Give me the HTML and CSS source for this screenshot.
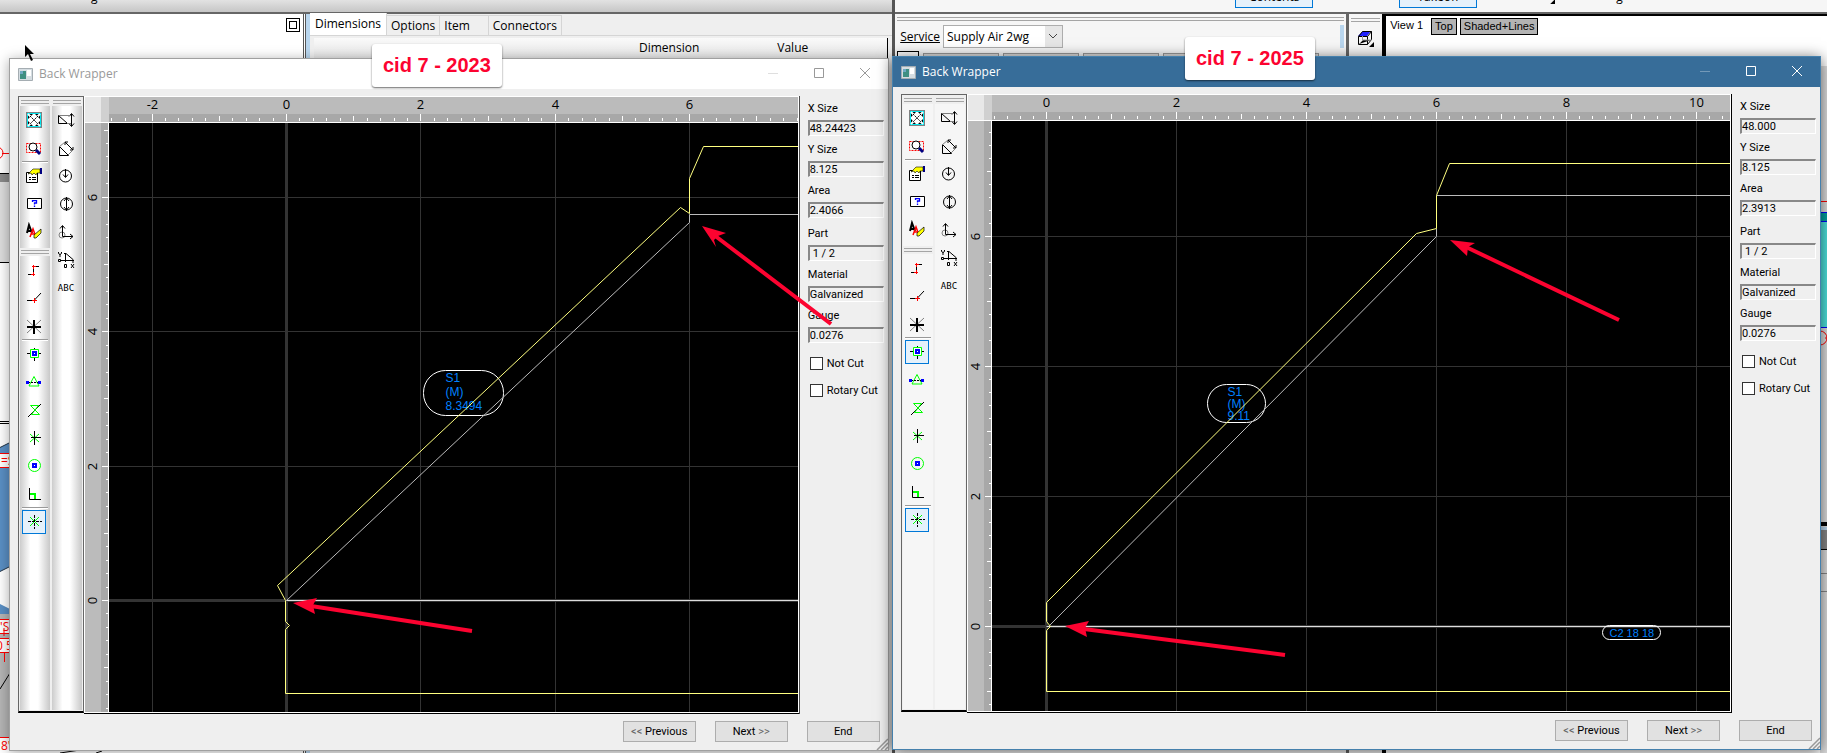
FILE: index.html
```html
<!DOCTYPE html>
<html lang="en">

<head>
    <meta charset="UTF-8">
    <meta name="viewport" content="width=device-width, initial-scale=1.0">
    <title>Back Wrapper</title>
    <link rel="stylesheet" href="styles.css">
</head>

<body>
    <!-- shared icons -->
    <svg class="defs" width="0" height="0" aria-hidden="true">
        <symbol id="i-fit" viewBox="0 0 20 20">
            <path fill="#808080" d="M2 2h16v16H2z"/><path fill="#00e5ee" d="M3 3h14v14H3z"/><path fill="#fff" d="M4 4h12v12H4z"/>
            <path fill="#000" d="M4 4h5L4 9zM16 4v5l-5-5zM4 16v-5l5 5zM16 16h-5l5-5z"/>
            <path stroke="#fff" stroke-width="2" d="M4 4l12 12M16 4L4 16"/>
            <path stroke="#000" d="M6 6l8 8M14 6l-8 8" stroke-dasharray="2 1"/>
        </symbol>
        <symbol id="i-zoom" viewBox="0 0 20 20">
            <path stroke="#f00" fill="none" stroke-dasharray="2 1" d="M2.500 5.500h14v9h-14z"/>
            <circle cx="9" cy="9" r="4" fill="#fff" stroke="#000"/><path stroke="#000080" stroke-width="3" d="M12 12l4 4"/>
        </symbol>
        <symbol id="i-props" viewBox="0 0 20 20">
            <path fill="#fff" stroke="#000" d="M2.500 6.500h11v10h-11z"/><path stroke="#000" d="M5 11.500h2m1 0h4M5 13.500h2m1 0h4"/>
            <path fill="#ff0" stroke="#000" stroke-width=".6" d="M4 8l5-5h7v4h-3l-1 2-2-2-2 2-1-2z"/><path fill="#000080" d="M16 2h2v6h-2z"/>
        </symbol>
        <symbol id="i-help" viewBox="0 0 20 20">
            <path fill="#fff" stroke="#000" d="M3.500 4.500h14v10h-14z"/>
            <path fill="none" stroke="#00f" stroke-width="1.300" d="M8.500 8V6.700h4V9h-2v1.600M10.500 11.600v1.400"/>
        </symbol>
        <symbol id="i-style" viewBox="0 0 20 20">
            <path fill="none" stroke="#000" stroke-width="2" d="M3 11l2-8 3 8M3 9h4"/><path fill="none" stroke="#f00" stroke-width="1.500" d="M6 15l3-8 3 8M7 12h4"/>
            <path fill="#ff0" stroke="#000" stroke-width=".7" d="M10 13l7-6v4l-5 5h-2z"/>
        </symbol>
        <symbol id="i-step" viewBox="0 0 20 20"><path fill="none" stroke="#000" d="M4 14.500h5.500v-8H15"/><path stroke="#f00" d="M8 6.500h4M9.500 5v4M7 14.500h4M9.500 12v4"/></symbol>
        <symbol id="i-bend" viewBox="0 0 20 20"><path fill="none" stroke="#000" d="M3 12.500h7L17 5"/><path stroke="#f00" d="M8 12.500h5M10.500 10v5"/></symbol>
        <symbol id="i-star" viewBox="0 0 20 20"><path stroke="#808080" d="M3 4l14 13M17 4L3 17"/><path stroke="#000" stroke-width="2" d="M3 11h14M10 4v14"/></symbol>
        <symbol id="i-end" viewBox="0 0 20 20"><path stroke="#000" d="M3 9.500h14M10.500 4v13"/><path fill="#fff" stroke="#0f0" d="M6.500 5.500h8v8h-8z"/><path fill="#00f" d="M8 7h5v5H8z"/><path fill="#fff" d="M10 9h1v1h-1z"/></symbol>
        <symbol id="i-mid" viewBox="0 0 20 20"><path fill="none" stroke="#0f0" d="M10 4.500l5 9.500H5z"/><path stroke="#000" stroke-dasharray="2 1" d="M4 10.500h13"/><path fill="#00f" d="M2 9h3v3H2zM14 9h3v3h-3z"/></symbol>
        <symbol id="i-near" viewBox="0 0 20 20"><path stroke="#000" d="M4 17L17 4"/><path fill="none" stroke="#0f0" d="M6.500 5.500h8l-7 9h8l-9-9"/></symbol>
        <symbol id="i-cross" viewBox="0 0 20 20"><path stroke="#0f0" d="M6 6l9 8M15 6l-9 8"/><path stroke="#000" d="M10.500 3v14M7 9.500h10"/></symbol>
        <symbol id="i-centre" viewBox="0 0 20 20"><circle cx="10.500" cy="9.500" r="6" fill="none" stroke="#0f0"/><path fill="#00f" d="M8 7h5v5H8z"/><path fill="#fff" d="M10 9h1v1h-1z"/></symbol>
        <symbol id="i-perp" viewBox="0 0 20 20"><path fill="none" stroke="#000" d="M5.500 4v11.500H17"/><path fill="none" stroke="#0f0" stroke-width="2" d="M6 10h5v5"/></symbol>
        <symbol id="i-snap" viewBox="0 0 20 20"><path stroke="#0f0" d="M6 5l9 9M15 5l-9 9"/><path stroke="#000" stroke-dasharray="3 1" d="M10.500 3v14M4 9.500h14"/></symbol>
        <symbol id="i-dimv" viewBox="0 0 20 20"><path fill="none" stroke="#000" d="M2.500 5.500v8h9zM15.500 4v12M13 6.500l2.500-3 2.500 3M13 13.500l2.500 3 2.500-3"/><path stroke="#808080" d="M3 5.500h12M11 13.500h4"/></symbol>
        <symbol id="i-dimd" viewBox="0 0 20 20"><path fill="none" stroke="#000" d="M3.500 8.500v9h9zM9 4l8 8M9 7V4h3M17 9v3h-3"/><path stroke="#808080" d="M3 9l6-5M12 17l5-5"/></symbol>
        <symbol id="i-rad" viewBox="0 0 20 20"><circle cx="9.500" cy="10" r="6" fill="none" stroke="#000"/><path fill="none" stroke="#000" d="M9.500 3v8M7 8.500l2.500 3 2.500-3"/></symbol>
        <symbol id="i-dia" viewBox="0 0 20 20"><circle cx="10.500" cy="10" r="6" fill="none" stroke="#000"/><path fill="none" stroke="#000" d="M10.500 3v14M8 7l2.500-3L13 7M8 13l2.500 3 2.500-3"/></symbol>
        <symbol id="i-axis" viewBox="0 0 20 20"><circle cx="6" cy="13" r="3" fill="none" stroke="#808080"/><path fill="none" stroke="#000" d="M6.500 4v10.500H17M4 6.500l2.500-3 2.500 3M14 12l3 2.500-3 2.500"/></symbol>
        <symbol id="i-ord" viewBox="0 0 20 20"><path fill="none" stroke="#000" d="M9.500 3v9M5 10.500h13M8 3.500h2l7 6V13M2.500 2v1.500l1.500 1 1.500-1V2M4 4v3"/><path fill="none" stroke="#000" d="M2.500 9.500h2v2h-2zM8.500 14.500h2v3h-2zM15 14l3 4M18 14l-3 4"/></symbol>
        <symbol id="i-app" viewBox="0 0 15 13"><path fill="#d5dde2" stroke="#a5adb2" d="M.5.5h14v12H.500z"/><path fill="#3f8f82" d="M2 3h6v8H2z"/><path fill="#70a9c4" d="M2 3h3v3H2z"/><path fill="#fff" d="M9 2h4v6H9z"/></symbol>
        <symbol id="i-min" viewBox="0 0 10 10"><path stroke="currentColor" d="M0 5.500h10"/></symbol>
        <symbol id="i-max" viewBox="0 0 10 10"><path fill="none" stroke="currentColor" d="M.5.5h9v9h-9z"/></symbol>
        <symbol id="i-close" viewBox="0 0 10 10"><path stroke="currentColor" d="M0 0l10 10M10 0L0 10"/></symbol>
        <symbol id="i-grip" viewBox="0 0 12 12"><path stroke="#999" stroke-width="1.500" d="M1 12L12 1M5 12l7-7M9 12l3-3"/></symbol>
    </svg>

    <main class="desktop">
        <!-- 2023 application behind the dialog -->
        <section class="app app-old">
            <div class="app-bar"><span class="cut-text menu-old">g</span></div>
            <div class="app-body">
                <div class="pane">
                    <button class="restore" aria-label="Restore"></button>
                    <svg class="model model-old" aria-hidden="true">
                        <path fill="#8a8a8a" d="M0 160h10v8H0z"/><path fill="#ddd" d="M0 168h10v80H0z"/>
                        <path stroke="#000" d="M0 159.500h10M0 248.500h10M0 407.500h10M0 409.500h10"/>
                        <path fill="#5a8fc4" stroke="#234" d="M-1 434l12-6v124l-12 6z"/><path fill="#fff" d="M0 439h10v14H0z"/>
                        <path fill="#5a8fc4" d="M0 590l10 5v5H0z"/><path fill="#b5b5b5" d="M0 600h10v140H0z"/>
                        <path fill="#fff" d="M0 605h10v14H0zM0 624h10v14H0zM0 723h10v16H0z"/>
                        <path fill="none" stroke="#f00" d="M-3 133a5 5 0 0 1 0 12M2 139.500h8M0 439.500h10M0 453.500h10M0 605.500h10M0 619.500h10M0 624.500h10M0 638.500h10M4.500 638v10M0 723.500h10M4 614v8"/>
                        <path stroke="#000" d="M0 675l10-16M60 739l20-3M96 739l6-2"/>
                        <text x="1" y="451">=S</text><text x="0" y="617">'S</text><text x="-4" y="636">0 5</text><text x="1" y="736">8"</text>
                    </svg>
                </div>
                <div class="sheet">
                    <nav class="tabs">
                        <button class="tab active">Dimensions</button><button class="tab">Options</button><button class="tab">Item</button><button class="tab">Connectors</button>
                    </nav>
                    <div class="sheet-head"><span>Dimension</span><span>Value</span></div>
                </div>
            </div>
        </section>

        <!-- 2025 application behind the dialog -->
        <section class="app app-new">
            <div class="app-bar">
                <button class="cut-button">Contents</button><button class="cut-button">Takeoff</button><i class="corner"></i><span class="cut-text">g</span>
            </div>
            <div class="app-body">
                <div class="service">
                    <div class="gripper"></div>
                    <div class="service-row">
                        <label for="service">Service</label>
                        <select id="service"><option>Supply Air 2wg</option></select>
                    </div>
                    <div class="service-tabs"><i></i><i></i><i></i><i></i><i></i><i></i></div>
                </div>
                <div class="view-tools">
                    <div class="gripper"></div>
                    <button aria-label="View cube"><svg width="18" height="18" viewBox="0 0 18 18"><path fill="#22f" d="M1 6l5-5h8l-4 5z"/><path fill="none" stroke="#000" d="M1.500 6.500h9v8h-9zM1.500 6.500l4-5h9l-4 5M10.500 14.500l4-5v-8"/><path stroke="#999" d="M5.500 6v4M2 14l4-4h8"/><path d="M17 12v5h-5z"/></svg></button>
                </div>
                <div class="viewport">
                    <span>View 1</span><button>Top</button><button>Shaded+Lines</button>
                    <svg class="model model-new" aria-hidden="true">
                        <path fill="#ddd" d="M0 50h10v700H0z"/><path fill="#00a0a0" d="M0 196h10v9H0z"/><path fill="#4de3de" d="M0 205h10v106H0z"/>
                        <path stroke="#00f" d="M0 196.500h10M0 205.500h10M0 311.500h10"/><path fill="none" stroke="#f00" d="M0 185.500h10M0 315a7 7 0 0 1 0 14M5 322h4"/>
                        <path fill="#000" d="M0 506h10v4H0z"/><path fill="#b9d6ee" d="M0 511h10v3H0z"/><path fill="#888" d="M0 514h10v19H0z"/>
                        <path stroke="#000" d="M0 533.500h10"/><path stroke="#888" d="M0 557.500h10M0 575.500h10"/>
                    </svg>
                </div>
            </div>
        </section>

        <section class="window window-old">
            <header class="titlebar">
                <svg width="15" height="13"><use href="#i-app"/></svg>
                <h1>Back Wrapper</h1>
                <button class="min" aria-label="Minimize"><svg width="10" height="10"><use href="#i-min"/></svg></button>
                <button aria-label="Maximize"><svg width="10" height="10"><use href="#i-max"/></svg></button>
                <button aria-label="Close"><svg width="10" height="10"><use href="#i-close"/></svg></button>
            </header>
            <div class="work">
                <div class="toolbox">
                    <div class="tool-col">
                        <div class="gripper"></div>
                        <div class="tools" data-icons="fit zoom | props help style"></div>
                        <div class="gripper"></div>
                        <div class="tools fill" data-icons="step bend star | end mid near cross centre perp | snap*"></div>
                    </div>
                    <div class="tool-col">
                        <div class="gripper"></div>
                        <div class="tools fill" data-icons="dimv dimd rad dia axis ord ABC"></div>
                    </div>
                </div>
                <svg class="drawing" data-x="201.5" data-y="503.5" data-step="134.4">
                    <g class="grid"></g>
                    <g transform="translate(201.5 503.5)">
                        <text class="note" x="159" y="-219">S1</text><text class="note" x="159" y="-205">(M)</text><text class="note" x="159" y="-191">8.3494</text>
                        <rect class="bubble" x="137" y="-230" width="80" height="45" rx="22"/>
                        <path class="fold" d="M2000-386H403V-378L0 0"/>
                        <path class="base" d="M0 0H2000"/>
                        <path class="cut" d="M2000-454H417L403-422V-387L394-393L-9-15L-1 0V21L3 25L-1 29V93H2000"/>
                    </g>
                    <g class="rulers"></g>
                </svg>
                <form class="info">
                    <label for="x1">X Size</label><input id="x1" type="text" readonly value="48.24423">
                    <label for="y1">Y Size</label><input id="y1" type="text" readonly value="8.125">
                    <label for="a1">Area</label><input id="a1" type="text" readonly value="2.4066">
                    <label for="p1" class="group">Part</label><input id="p1" class="part" type="text" readonly value="1 / 2">
                    <label for="m1">Material</label><input id="m1" type="text" readonly value="Galvanized">
                    <label for="g1">Gauge</label><input id="g1" type="text" readonly value="0.0276">
                    <div class="check"><input id="n1" type="checkbox"><label for="n1">Not Cut</label></div>
                    <div class="check"><input id="r1" type="checkbox"><label for="r1">Rotary Cut</label></div>
                </form>
            </div>
            <footer class="actions">
                <button><i>&lt;&lt;</i> Previous</button><button>Next <i>&gt;&gt;</i></button><button>End</button>
                <svg class="grip" width="12" height="12"><use href="#i-grip"/></svg>
            </footer>
        </section>

        <section class="window window-new">
            <header class="titlebar">
                <svg width="15" height="13"><use href="#i-app"/></svg>
                <h1>Back Wrapper</h1>
                <button class="min" aria-label="Minimize"><svg width="10" height="10"><use href="#i-min"/></svg></button>
                <button aria-label="Maximize"><svg width="10" height="10"><use href="#i-max"/></svg></button>
                <button aria-label="Close"><svg width="10" height="10"><use href="#i-close"/></svg></button>
            </header>
            <div class="work">
                <div class="toolbox">
                    <div class="tool-col">
                        <div class="gripper"></div>
                        <div class="tools" data-icons="fit zoom | props help style"></div>
                        <div class="gripper"></div>
                        <div class="tools fill" data-icons="step bend star | end* mid near cross centre perp | snap*"></div>
                    </div>
                    <div class="tool-col">
                        <div class="gripper"></div>
                        <div class="tools fill" data-icons="dimv dimd rad dia axis ord ABC"></div>
                    </div>
                </div>
                <svg class="drawing" data-x="78.5" data-y="531.5" data-step="130">
                    <g class="grid"></g>
                    <g transform="translate(78.5 531.5)">
                        <text class="note" x="181" y="-231">S1</text><text class="note" x="181" y="-219">(M)</text><text class="note" x="181" y="-207">9.11</text>
                        <rect class="bubble" x="161" y="-242" width="58" height="38" rx="19"/>
                        <path class="fold" d="M2000-431H390M390-398V-390L2 0"/>
                        <path class="base" d="M0 0H2000"/>
                        <path class="cut" d="M2000-463H403L390-431V-398L370-393L0-24V-5L4 0L0 4V65H2000"/>
                        <rect class="bubble" x="556" y="-1" width="58" height="14" rx="7"/>
                        <text class="note small" x="563" y="10">C2 18 18</text>
                    </g>
                    <g class="rulers"></g>
                </svg>
                <form class="info">
                    <label for="x2">X Size</label><input id="x2" type="text" readonly value="48.000">
                    <label for="y2">Y Size</label><input id="y2" type="text" readonly value="8.125">
                    <label for="a2">Area</label><input id="a2" type="text" readonly value="2.3913">
                    <label for="p2" class="group">Part</label><input id="p2" class="part" type="text" readonly value="1 / 2">
                    <label for="m2">Material</label><input id="m2" type="text" readonly value="Galvanized">
                    <label for="g2">Gauge</label><input id="g2" type="text" readonly value="0.0276">
                    <div class="check"><input id="n2" type="checkbox"><label for="n2">Not Cut</label></div>
                    <div class="check"><input id="r2" type="checkbox"><label for="r2">Rotary Cut</label></div>
                </form>
            </div>
            <footer class="actions">
                <button><i>&lt;&lt;</i> Previous</button><button>Next <i>&gt;&gt;</i></button><button>End</button>
                <svg class="grip" width="12" height="12"><use href="#i-grip"/></svg>
            </footer>
        </section>

        <!-- markup on top of both windows -->
        <div class="tag tag-old">cid 7 - 2023</div>
        <div class="tag tag-new">cid 7 - 2025</div>
        <svg class="arrows" aria-hidden="true">
            <path class="shaft" d="M831 324L714 235M472 631L311 606M1619 320L1466 247M1285 655L1084 629"/>
            <path class="head" d="M702 226l24 7-8 3-4 4 2 7zM293 603l24-5-4 7 2 9zM1450 240l25 3-7 4-1 9zM1065 626l24-5-4 7 2 9z"/>
        </svg>
        <svg class="cursor" width="10" height="17" viewBox="0 0 10 17" aria-hidden="true"><path d="M0 0v12l3-3 3 7 2-1-3-6h4z"/></svg>
    </main>

    <script src="main.js"></script>
</body>

</html>
```
FILE: styles.css
```css
* {
    margin: 0;
    padding: 0;
    box-sizing: border-box;
}

body {
    font-family: Roboto, 'Liberation Sans', sans-serif;
    font-size: 11px;
    color: #000;
    background-color: #ddd;
}

button,
input,
select {
    font: inherit;
    color: inherit;
    border: 0;
    border-radius: 0;
    background: none;
}

i {
    font-style: normal;
}

.defs {
    position: absolute;
}

.desktop {
    position: relative;
    display: flex;
    height: 100vh;
    overflow: hidden;
}

/* applications in the background */
.app {
    display: flex;
    flex-direction: column;
    font-family: 'Open Sans', 'Noto Sans', sans-serif;
    font-size: 12px;
}

.app-old {
    width: 49%;
    border-right: 3px solid #555;
}

.app-new {
    flex: 1;
}

.app-bar {
    display: flex;
    height: 14px;
    overflow: hidden;
    background: linear-gradient(#e2e2e2, #c6c6c6);
    border-bottom: 2px solid #666;
}

.app-new .app-bar {
    background: #f6f6f6;
    padding-left: 340px;
}

.cut-text {
    line-height: 16px;
    margin-top: -11px;
}

.menu-old {
    margin-left: 91px;
}

.cut-button {
    width: 78px;
    height: 22px;
    line-height: 16px;
    margin: -14px 86px 0 0;
    background: #e5f1fb;
    border: 1px solid #0078d7;
}

.corner {
    margin: -1px 61px 0 -13px;
    width: 5px;
    height: 5px;
    background: #000;
    clip-path: polygon(100% 0, 100% 100%, 0 100%);
}

.app-body {
    display: flex;
    flex: 1;
}

.pane {
    position: relative;
    width: 306px;
    background: #fff;
    border-right: 3px double #555;
}

.restore {
    position: absolute;
    top: 4px;
    right: 3px;
    width: 14px;
    height: 14px;
    border: 4px double #000;
}

.model {
    position: absolute;
    top: 0;
    width: 100%;
    height: 100%;
}

.model text {
    font-size: 12px;
    fill: #f00;
}

.model-old {
    left: 0;
}

.sheet {
    flex: 1;
    border-left: 4px solid #b9d6ee;
    background: #efefef;
}

.tabs {
    display: flex;
    align-items: flex-end;
    height: 22px;
    border-bottom: 1px solid #d5d5d5;
}

.tab {
    height: 20px;
    line-height: 18px;
    padding: 0 4px;
    border: 1px solid #d5d5d5;
    border-left: 0;
    border-bottom: 0;
}

.tab:nth-child(3) {
    padding-right: 18px;
}

.tab.active {
    width: 77px;
    height: 22px;
    background: #fff;
    border-top: 0;
}

.sheet-head {
    display: flex;
    gap: 78px;
    margin: 2px 4px;
    padding-left: 325px;
    line-height: 20px;
    background: linear-gradient(#fafafa, #e4e4e4);
    border-right: 1px solid #000;
}

.service {
    width: 451px;
    padding: 3px 2px;
    background: #f6f6f6;
}

.gripper {
    height: 4px;
    border: 1px solid #a5a5a5;
    border-width: 1px 0;
}

.service-row {
    display: flex;
    align-items: center;
    gap: 3px;
    margin-top: 4px;
    padding-left: 3px;
    border-right: 4px solid #b9d6ee;
}

.service-row label {
    text-decoration: underline;
}

.service-row select {
    appearance: none;
    width: 120px;
    height: 23px;
    padding-left: 3px;
    background: url("data:image/svg+xml,%3Csvg xmlns='http://www.w3.org/2000/svg' width='17' height='21'%3E%3Cpath fill='%23e6e6e6' d='M0 0h17v21H0z'/%3E%3Cpath fill='none' stroke='%23444' d='M4 8l4 4 4-4'/%3E%3C/svg%3E") right center no-repeat #fff;
    border: 1px solid #adadad;
}

.service-tabs {
    display: flex;
    gap: 4px;
    margin-top: 3px;
}

.service-tabs i {
    width: 76px;
    height: 12px;
    margin-top: 2px;
    border: 1px solid #999;
    background: #ddd;
}

.service-tabs i:first-child {
    width: 22px;
    margin-top: 0;
    border-color: #000;
    background: #fff;
}

.view-tools {
    width: 36px;
    padding: 4px 2px;
    background: #f6f6f6;
    border-left: 3px solid #666;
}

.view-tools button {
    display: block;
    margin: 8px auto;
}

.viewport {
    position: relative;
    flex: 1;
    display: flex;
    align-items: flex-start;
    gap: 3px;
    padding: 2px 4px;
    background: #fff;
    border: solid #000;
    border-width: 2px 0 0 4px;
    font-family: 'Liberation Sans', sans-serif;
    font-size: 11px;
    line-height: 15px;
}

.viewport span {
    margin-right: 5px;
}

.viewport button {
    padding: 0 3px;
    background: #b3b3b3;
    border: 1px solid #000;
}

.model-new {
    right: 0;
    width: 7px;
}

/* dialog windows */
.window {
    position: absolute;
    display: flex;
    flex-direction: column;
    background: #efefef;
    border: 1px solid #a0a0a0;
    box-shadow: 0 2px 12px rgba(0, 0, 0, 0.35);
}

.window-old {
    left: 9px;
    top: 58px;
    bottom: 2px;
    width: 48.15%;
}

.window-new {
    left: 892px;
    right: 6px;
    top: 56px;
    bottom: 3px;
    border-color: #4580ac;
    box-shadow: 0 2px 14px rgba(0, 0, 0, 0.6);
}

.titlebar {
    display: flex;
    align-items: center;
    height: 30px;
    padding-left: 8px;
    color: #999;
    background: #fff;
}

.titlebar h1 {
    flex: 1;
    padding: 0 0 2px 6px;
    font: 12px 'Open Sans', 'Noto Sans', sans-serif;
}

.titlebar button {
    width: 46px;
    height: 30px;
}

.titlebar .min {
    opacity: 0.3;
}

.window-new .titlebar {
    color: #fff;
    background: #376d99;
}

.work {
    flex: 1;
    display: flex;
    min-height: 0;
    padding: 7px 0 0 8px;
}

.toolbox {
    display: flex;
    gap: 2px;
    width: 66px;
    padding: 1px;
    border: 1px solid #666;
    border-bottom: 2px solid #000;
}

.tool-col {
    flex: 1;
    display: flex;
    flex-direction: column;
}

.toolbox .gripper {
    margin: 2px 1px;
}

.tools {
    background: linear-gradient(90deg, #ccc, #fff 35%, #fff 60%, #c8c8c8);
}

.window-new .tools {
    background: #f6f6f6;
}

.tools.fill {
    flex: 1;
}

.tools button {
    display: flex;
    align-items: center;
    justify-content: center;
    width: 24px;
    height: 24px;
    margin: 2px 2px 4px;
    font: 9px 'DejaVu Sans Mono', monospace;
}

.tools button.on {
    background: #e5f1fb;
    border: 1px solid #0078d7;
}

.tools hr {
    height: 2px;
    margin: -3px 2px -1px;
    border: 0;
    border-top: 1px solid #999;
    background: #fff;
}

.tools svg {
    flex: none;
    width: 20px;
    height: 20px;
}

.drawing {
    flex: 1;
    min-width: 0;
    height: 100%;
    background: #000;
    border: 1px solid #fff;
    outline: 1px solid #000;
    clip-path: inset(0 -1px -1px 0);
}

.drawing path,
.drawing line {
    fill: none;
}

.grid line {
    stroke: #333;
}

.fold {
    stroke: #bbb;
}

.base {
    stroke: #ddd;
}

.cut {
    stroke: #ffff80;
}

.bubble {
    fill: none;
    stroke: #fff;
}

.note {
    font: 12px 'Liberation Sans', sans-serif;
    fill: #0080ff;
}

.note.small {
    font-size: 11px;
}

.rulers text {
    font: 13px 'Open Sans', 'Noto Sans', sans-serif;
    text-anchor: middle;
}

.rulers line {
    stroke: #fff;
}

.info {
    width: 89px;
    padding: 6px 4px 0 9px;
}

.info > label {
    display: block;
    height: 14px;
    line-height: 14px;
}

.info > .group {
    margin-top: 9px;
}

.info input[type="text"] {
    display: block;
    width: 100%;
    height: 16px;
    margin: 4px 0 7px;
    border: 1px solid #fff;
    border-top: 2px solid #888;
    border-left: 2px solid #888;
}

.info .part {
    padding-left: 3px;
}

.check {
    display: flex;
    align-items: center;
    gap: 4px;
    margin: 14px 0 0 2px;
}

.check input {
    appearance: none;
    width: 13px;
    height: 13px;
    background: #fff;
    border: 1px solid #333;
}

.check label {
    line-height: 13px;
    white-space: nowrap;
}

.actions {
    position: relative;
    display: flex;
    justify-content: flex-end;
    gap: 19px;
    padding: 8px;
}

.actions button {
    width: 73px;
    height: 21px;
    background: #e1e1e1;
    border: 1px solid #adadad;
}

.actions i {
    color: #666;
}

.grip {
    position: absolute;
    right: 0;
    bottom: 0;
}

/* annotations */
.tag {
    position: absolute;
    padding: 10px 11px;
    font: bold 20px/23px 'Liberation Sans', sans-serif;
    color: #fc0330;
    background: #fff;
    border-radius: 3px;
    box-shadow: 0 1px 2px rgba(0, 0, 0, 0.6);
    white-space: nowrap;
}

.tag-old {
    left: 372px;
    top: 44px;
}

.tag-new {
    left: 1185px;
    top: 37px;
}

.arrows {
    position: absolute;
    inset: 0;
    width: 100%;
    height: 100%;
    pointer-events: none;
}

.shaft {
    stroke: #fc0330;
    stroke-width: 4;
}

.head {
    fill: #fc0330;
}

.cursor {
    position: absolute;
    left: 25px;
    top: 45px;
}
```
FILE: main.js
```js
const NS = 'http://www.w3.org/2000/svg';

function add(parent, tag, attrs, text) {
    const el = document.createElementNS(NS, tag);
    for (const key in attrs) el.setAttribute(key, attrs[key]);
    if (text !== undefined) el.textContent = text;
    parent.appendChild(el);
    return el;
}

// tool buttons: "|" is a separator, "*" marks a pressed button
document.querySelectorAll('.tools').forEach(box => {
    box.dataset.icons.split(' ').forEach(name => {
        if (name === '|') {
            box.appendChild(document.createElement('hr'));
            return;
        }
        const button = document.createElement('button');
        const icon = name.replace('*', '');
        if (name.endsWith('*')) button.className = 'on';
        if (icon === 'ABC') {
            button.textContent = icon;
        } else {
            button.setAttribute('aria-label', icon);
            const svg = add(button, 'svg', {});
            add(svg, 'use', { href: '#i-' + icon });
        }
        box.appendChild(button);
    });
});

// grid and rulers, one major line every 2 inches
function drawRulers(svg) {
    const x0 = +svg.dataset.x;
    const y0 = +svg.dataset.y;
    const step = +svg.dataset.step;
    const w = svg.clientWidth;
    const h = svg.clientHeight;
    const grid = svg.querySelector('.grid');
    const rulers = svg.querySelector('.rulers');
    grid.replaceChildren();
    rulers.replaceChildren();

    add(rulers, 'rect', { x: 0, y: 0, width: w, height: 17, fill: '#bbb' });
    add(rulers, 'rect', { x: 0, y: 17, width: w, height: 8, fill: '#a8a8a8' });
    add(rulers, 'rect', { x: 0, y: 25, width: 16, height: h, fill: '#bbb' });
    add(rulers, 'rect', { x: 16, y: 25, width: 7, height: h, fill: '#a8a8a8' });
    add(rulers, 'rect', { x: 0, y: 0, width: 24, height: 25, fill: '#e8e8e8' });
    add(rulers, 'rect', { x: 16, y: 0, width: 8, height: 25, fill: '#d0d0d0' });
    add(rulers, 'line', { x1: 0, x2: w, y1: 25.5, y2: 25.5 });
    add(rulers, 'line', { x1: 23.5, x2: 23.5, y1: 25, y2: h });

    for (let i = -60; i <= 120; i++) {
        const x = Math.floor(x0 + i * step / 10) + 0.5;
        const y = Math.floor(y0 - i * step / 10) + 0.5;
        const size = i % 10 === 0 ? 7 : i % 5 === 0 ? 5 : 3;
        const line = i === 0 ? 3 : 1;
        if (x > 24 && x < w) {
            add(rulers, 'line', { x1: x, x2: x, y1: 24 - size, y2: 24 });
            if (i % 10 === 0) {
                add(grid, 'line', { x1: x, x2: x, y1: 0, y2: h, 'stroke-width': line });
                add(rulers, 'text', { x: x, y: 12 }, i / 5);
            }
        }
        if (y > 26 && y < h) {
            add(rulers, 'line', { x1: 24 - size, x2: 24, y1: y, y2: y });
            if (i % 10 === 0) {
                add(grid, 'line', { x1: 0, x2: w, y1: y, y2: y, 'stroke-width': line });
                add(rulers, 'text', { x: 0, y: 0, transform: `translate(12 ${y}) rotate(-90)` }, i / 5);
            }
        }
    }
}

function drawAll() {
    document.querySelectorAll('.drawing').forEach(drawRulers);
}

window.addEventListener('resize', drawAll);
drawAll();
```
